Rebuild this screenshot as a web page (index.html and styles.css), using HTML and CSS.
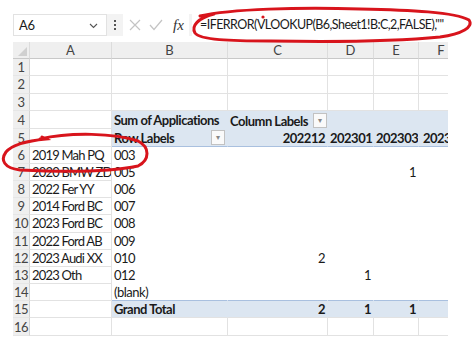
FILE: index.html
```html
<!DOCTYPE html>
<html lang="en">
<head>
    <meta charset="UTF-8">
    <title>Pivot - VLOOKUP</title>
    <link rel="stylesheet" href="styles.css">
</head>
<body>
    <div class="shot">
        <div class="toolbar">
            <div class="namebox">
                <span>A6</span>
                <svg class="chev" width="9" height="6" viewBox="0 0 9 6"><path d="M1 1 L4.5 4.5 L8 1" fill="none" stroke="#555" stroke-width="1.1"/></svg>
            </div>
            <div class="dots"><i></i><i></i><i></i></div>
            <div class="fxbox">
                <svg width="12" height="12" viewBox="0 0 12 12"><path d="M1 1 L11 11 M11 1 L1 11" stroke="#c4c4c4" stroke-width="1.2"/></svg>
                <svg width="14" height="12" viewBox="0 0 14 12"><path d="M1 6 L5 10.5 L13 1" fill="none" stroke="#c4c4c4" stroke-width="1.2"/></svg>
                <span class="fx">fx</span>
            </div>
            <div class="formula">=IFERROR(VLOOKUP(B6,Sheet1!B:C,2,FALSE),""</div>
        </div>

        <div class="sheet">
            <table class="grid">
                <colgroup>
                    <col class="c-hdr"><col class="c-a"><col class="c-b"><col class="c-c"><col class="c-d"><col class="c-e"><col class="c-f">
                </colgroup>
                <tr class="colhead">
                    <th class="corner"><span class="tri"></span></th><th>A</th><th>B</th><th>C</th><th>D</th><th>E</th><th>F</th>
                </tr>
                <tr><th>1</th><td></td><td></td><td></td><td></td><td></td><td></td></tr>
                <tr><th>2</th><td></td><td></td><td></td><td></td><td></td><td></td></tr>
                <tr><th>3</th><td></td><td></td><td></td><td></td><td></td><td></td></tr>
                <tr class="pv-head">
                    <th>4</th><td></td>
                    <td class="pv b">Sum of Applications</td>
                    <td class="pv b" colspan="2"><span class="lbl">Column Labels</span><span class="dd">&#9662;</span></td>
                    <td class="pv"></td><td class="pv"></td>
                </tr>
                <tr class="pv-head pv-line">
                    <th>5</th><td></td>
                    <td class="pv b"><div class="split"><span>Row Labels</span><span class="dd">&#9662;</span></div></td>
                    <td class="pv b num">202212</td><td class="pv b num">202301</td><td class="pv b num">202303</td><td class="pv b num cut">202305</td>
                </tr>
                <tr class="pv-body"><th>6</th><td class="lab">2019 Mah PQ</td><td class="pv">003</td><td class="pv"></td><td class="pv"></td><td class="pv"></td><td class="pv"></td></tr>
                <tr class="pv-body"><th>7</th><td class="lab">2020 BMW ZD</td><td class="pv">005</td><td class="pv"></td><td class="pv"></td><td class="pv num">1</td><td class="pv"></td></tr>
                <tr class="pv-body"><th>8</th><td class="lab">2022 Fer YY</td><td class="pv">006</td><td class="pv"></td><td class="pv"></td><td class="pv"></td><td class="pv"></td></tr>
                <tr class="pv-body"><th>9</th><td class="lab">2014 Ford BC</td><td class="pv">007</td><td class="pv"></td><td class="pv"></td><td class="pv"></td><td class="pv"></td></tr>
                <tr class="pv-body"><th>10</th><td class="lab">2023 Ford BC</td><td class="pv">008</td><td class="pv"></td><td class="pv"></td><td class="pv"></td><td class="pv"></td></tr>
                <tr class="pv-body"><th>11</th><td class="lab">2022 Ford AB</td><td class="pv">009</td><td class="pv"></td><td class="pv"></td><td class="pv"></td><td class="pv"></td></tr>
                <tr class="pv-body"><th>12</th><td class="lab">2023 Audi XX</td><td class="pv">010</td><td class="pv num">2</td><td class="pv"></td><td class="pv"></td><td class="pv"></td></tr>
                <tr class="pv-body"><th>13</th><td class="lab">2023 Oth</td><td class="pv">012</td><td class="pv"></td><td class="pv num">1</td><td class="pv"></td><td class="pv"></td></tr>
                <tr class="pv-body pv-line"><th>14</th><td></td><td class="pv">(blank)</td><td class="pv"></td><td class="pv"></td><td class="pv"></td><td class="pv"></td></tr>
                <tr class="pv-total"><th>15</th><td></td><td class="pv b">Grand Total</td><td class="pv b num">2</td><td class="pv b num">1</td><td class="pv b num">1</td><td class="pv"></td></tr>
                <tr><th>16</th><td></td><td></td><td></td><td></td><td></td><td></td></tr>
            </table>
        </div>

        <!-- red pen marks drawn over the screenshot -->
        <svg class="ink" width="474" height="337" viewBox="0 0 474 337">
            <path d="M200 16 C 230 9, 300 7, 360 9 C 410 10, 455 12, 469 20 C 474 27, 462 34, 440 37 C 400 41, 330 42, 270 41 C 230 41, 200 40, 195 33 C 191 26, 198 18, 214 14" fill="none" stroke="#d8141c" stroke-width="3" stroke-linecap="round"/>
            <circle cx="263" cy="17" r="1.6" fill="#d8141c"/>
            <path d="M40 139 C 70 132, 115 133, 138 141 C 150 147, 150 160, 138 166 C 110 172, 60 172, 20 170 C 4 168, 0 160, 6 152 C 12 145, 25 141, 46 139 L 42 137" fill="none" stroke="#d8141c" stroke-width="3" stroke-linecap="round"/>
        </svg>
    </div>
</body>
</html>
```

FILE: styles.css
```css
body {
    margin: 0;
    background: #ffffff;
    font-family: Lato, "Liberation Sans", sans-serif;
    color: #1a1a1a;
}
.shot {
    position: relative;
    width: 474px;
    height: 337px;
    overflow: hidden;
    padding-top: 14px;
    box-sizing: border-box;
}
.toolbar {
    display: flex;
    align-items: stretch;
    height: 22px;
    margin-left: 13px;
    width: 435px;
    background: #f3f3f3;
}
.namebox {
    width: 94px;
    background: #fff;
    border: 1px solid #e2e2e2;
    box-sizing: border-box;
    display: flex;
    align-items: center;
    justify-content: space-between;
    padding: 0 8px 0 5px;
    font-size: 13px;
    letter-spacing: -0.3px;
}
.chev {
    margin-top: 1px;
}
.dots {
    width: 16px;
    display: flex;
    flex-direction: column;
    align-items: center;
    justify-content: center;
    gap: 2px;
}
.dots i {
    width: 2px;
    height: 2px;
    background: #555;
}
.fxbox {
    width: 66px;
    background: #fff;
    display: flex;
    align-items: center;
    gap: 8px;
    padding-left: 6px;
    box-sizing: border-box;
}
.fx {
    font-family: "Liberation Serif", serif;
    font-style: italic;
    font-size: 15px;
    color: #333;
    margin-left: 2px;
}
.formula {
    flex: 1;
    margin-left: 3px;
    background: #fff;
    font-size: 12.5px;
    letter-spacing: -0.55px;
    line-height: 22px;
    padding-left: 8px;
    white-space: nowrap;
    overflow: hidden;
}
.sheet {
    margin: 6px 0 0 13px;
    width: 435px;
    overflow: hidden;
}
.grid {
    table-layout: fixed;
    width: 451px;
    border-collapse: separate;
    border-spacing: 0;
    font-size: 13px;
    letter-spacing: -0.5px;
}
.c-hdr { width: 17px; }
.c-a { width: 82px; }
.c-b { width: 116px; }
.c-c { width: 100px; }
.c-d { width: 46px; }
.c-e { width: 45px; }
.c-f { width: 45px; }
.grid tr {
    height: 17.2px;
}
.grid th {
    background: #efefef;
    color: #444;
    font-weight: normal;
    font-size: 13px;
    padding: 0;
    text-align: center;
    border-right: 1px solid #d4d4d4;
    border-bottom: 1px solid #e6e6e6;
    box-sizing: border-box;
    white-space: nowrap;
    overflow: hidden;
}
.grid .colhead th {
    height: 17px;
    border-bottom: 1px solid #c8c8c8;
    border-right: 1px solid #dcdcdc;
    letter-spacing: 0;
}
.grid .colhead th.corner {
    position: relative;
}
.tri {
    position: absolute;
    right: 2px;
    bottom: 2px;
    width: 0;
    height: 0;
    border-left: 9px solid transparent;
    border-bottom: 9px solid #d0d0d0;
}
.grid td {
    padding: 0 2px;
    border-right: 1px solid #e2e2e2;
    border-bottom: 1px solid #e2e2e2;
    white-space: nowrap;
    overflow: hidden;
    box-sizing: border-box;
}
.grid td.lab {
    letter-spacing: -0.8px;
    padding-left: 2px;
    padding-right: 0;
}
.grid td.pv {
    border-right-color: transparent;
    border-bottom-color: transparent;
}
.pv-head td.pv,
.pv-total td.pv {
    background: #dce6f1;
}
.pv-line td.pv {
    border-bottom-color: #a9c0df;
}
.pv-total td.pv {
    border-bottom-color: #e2e2e2;
}
.b {
    font-weight: bold;
}
.num {
    text-align: right;
    padding-right: 3px;
}
td.cut {
    text-align: left;
    padding-left: 4px;
}
.lbl {
    vertical-align: middle;
}
.split {
    display: flex;
    align-items: center;
    justify-content: space-between;
}
.dd {
    display: inline-block;
    width: 12px;
    height: 13px;
    margin-left: 5px;
    border: 1px solid #c2c2c2;
    background: #fafafa;
    color: #888;
    font-size: 8px;
    line-height: 13px;
    text-align: center;
    vertical-align: middle;
    font-weight: normal;
    letter-spacing: 0;
}
.ink {
    position: absolute;
    left: 0;
    top: 0;
    pointer-events: none;
}
```
